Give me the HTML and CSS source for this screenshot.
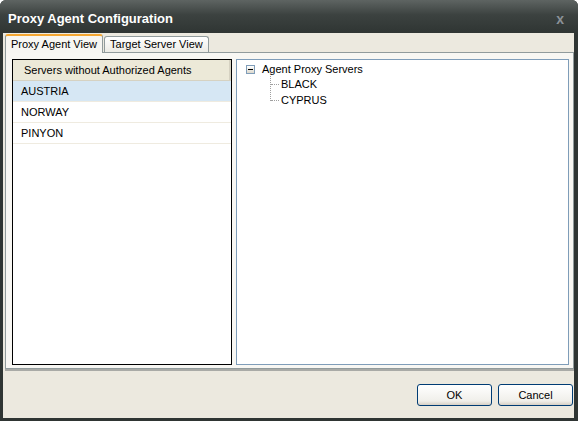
FILE: index.html
```html
<!DOCTYPE html>
<html lang="en">
<head>
    <meta charset="UTF-8">
    <title>Proxy Agent Configuration</title>
    <link rel="stylesheet" href="styles.css">
</head>
<body>
    <div class="dialog">
        <div class="title-bar">
            <span class="title">Proxy Agent Configuration</span>
            <span class="close">x</span>
        </div>
        <div class="dialog-body">
            <div class="tabs">
                <div class="tab active">Proxy Agent View</div>
                <div class="tab">Target Server View</div>
            </div>
            <div class="tab-panel">
                <div class="server-list">
                    <div class="list-header">Servers without Authorized Agents</div>
                    <div class="list-row selected">AUSTRIA</div>
                    <div class="list-row">NORWAY</div>
                    <div class="list-row">PINYON</div>
                </div>
                <div class="tree">
                    <div class="tree-root">
                        <span class="expander"></span>
                        <span>Agent Proxy Servers</span>
                    </div>
                    <ul class="tree-children">
                        <li>BLACK</li>
                        <li>CYPRUS</li>
                    </ul>
                </div>
            </div>
            <div class="button-bar">
                <button class="btn">OK</button>
                <button class="btn">Cancel</button>
            </div>
        </div>
    </div>
</body>
</html>
```

FILE: styles.css
```css
body {
    margin: 0;
    background-color: #ffffff;
    font-family: "Liberation Sans", Arial, sans-serif;
    font-size: 11px;
    color: #000;
}

.dialog {
    width: 578px;
    height: 421px;
    background-color: #2f3533;
    border-radius: 6px 6px 0 0;
    box-sizing: border-box;
    padding: 0 4px 3px 3px;
    display: flex;
    flex-direction: column;
}

.title-bar {
    height: 33px;
    display: flex;
    align-items: center;
    justify-content: space-between;
    background: linear-gradient(#5e6462, #3c4240 45%, #2f3533);
    margin: 0 -4px 0 -3px;
    padding: 4px 14px 0 8px;
    box-sizing: border-box;
    border-radius: 6px 6px 0 0;
}

.title {
    color: #ffffff;
    font-weight: bold;
    font-size: 13px;
}

.close {
    color: #8b9298;
    font-size: 14px;
    font-weight: bold;
}

.dialog-body {
    flex: 1;
    background-color: #ece9df;
    display: flex;
    flex-direction: column;
    padding: 2px 0 0 2px;
}

.tabs {
    display: flex;
    height: 17px;
    align-items: flex-end;
}

.tab {
    height: 15px;
    line-height: 15px;
    padding: 0 5px;
    border: 1px solid #919b9c;
    border-bottom: none;
    border-radius: 3px 3px 0 0;
    background: linear-gradient(#ffffff, #ecebe5);
    margin-right: 1px;
}

.tab.active {
    height: 17px;
    line-height: 17px;
    background-color: #f7f6f2;
    background-image: none;
    border-top: 2px solid #f4a631;
    position: relative;
    top: 1px;
    z-index: 1;
}

.tab-panel {
    height: 306px;
    border: 1px solid #919b9c;
    background-color: #f8f7f3;
    display: flex;
    gap: 4px;
    padding: 6px 4px 3px 6px;
}

.server-list {
    width: 218px;
    border: 1px solid #000;
    background-color: #fff;
}

.list-header {
    height: 20px;
    line-height: 20px;
    padding-left: 11px;
    background-color: #ece9d8;
    border-bottom: 1px solid #d6d2c2;
    border-right: 2px solid #d6d2c2;
}

.list-row {
    height: 20px;
    line-height: 20px;
    padding-left: 8px;
    border-bottom: 1px solid #efebe0;
}

.list-row.selected {
    background-color: #d6e7f4;
}

.tree {
    flex: 1;
    border: 1px solid #7f9db9;
    background-color: #fff;
    padding: 2px 0 0 9px;
}

.tree-root {
    display: flex;
    align-items: center;
    gap: 7px;
    height: 14px;
}

.expander {
    width: 7px;
    height: 7px;
    border: 1px solid #7f9db9;
    background: linear-gradient(#fff, #dcd8cc);
    position: relative;
}

.expander::after {
    content: "";
    position: absolute;
    left: 1px;
    top: 3px;
    width: 5px;
    height: 1px;
    background-color: #000;
}

.tree-children {
    list-style: none;
    margin: 0 0 0 24px;
    padding: 0;
    border-left: 1px dotted #a0a0a0;
    height: 25px;
}

.tree-children li {
    height: 16px;
    line-height: 16px;
    position: relative;
    padding-left: 10px;
}

.tree-children li::before {
    content: "";
    position: absolute;
    left: 0;
    top: 8px;
    width: 8px;
    border-top: 1px dotted #a0a0a0;
}

.button-bar {
    flex: 1;
    border-top: 2px solid #a9aaa6;
    display: flex;
    justify-content: flex-end;
    align-items: center;
    gap: 6px;
    padding: 0 1px 0 0;
}

.btn {
    width: 75px;
    height: 22px;
    font-family: "Liberation Sans", Arial, sans-serif;
    font-size: 11px;
    border: 1px solid #003c74;
    border-radius: 3px;
    background: linear-gradient(#ffffff, #f0efea 80%, #d6d0c5);
    margin-top: 1px;
}
```
